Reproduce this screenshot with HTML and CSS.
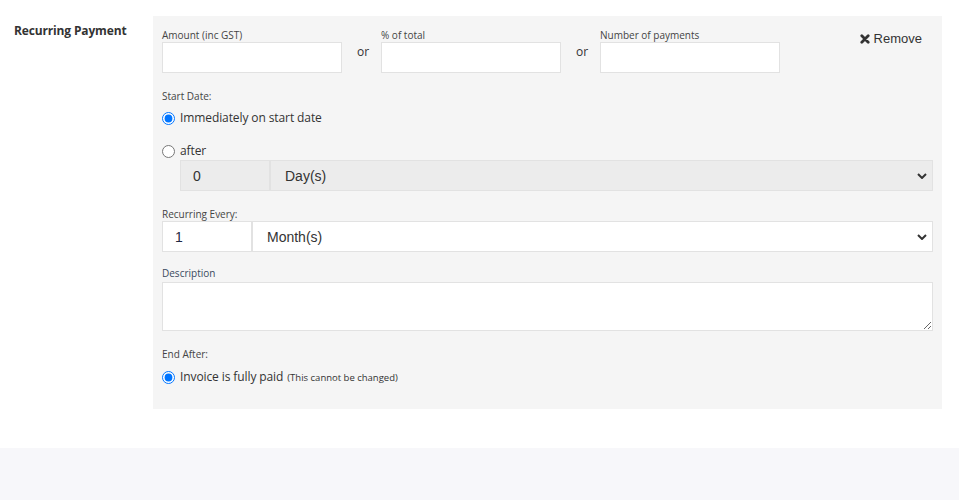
FILE: index.html
```html
<!DOCTYPE html>
<html lang="en">
<head>
  <meta charset="UTF-8">
  <meta name="viewport" content="width=device-width, initial-scale=1.0">
  <title>Recurring Payment</title>
  <link rel="stylesheet" href="styles.css">
</head>
<body>

  <div class="payment-row">
    <div class="row-title">Recurring Payment</div>

    <div class="panel">
      <div class="amounts">
        <div class="field">
          <label for="amount">Amount (inc GST)</label>
          <input type="text" id="amount" class="text-input">
        </div>
        <span class="or">or</span>
        <div class="field">
          <label for="percent">% of total</label>
          <input type="text" id="percent" class="text-input">
        </div>
        <span class="or">or</span>
        <div class="field">
          <label for="payments">Number of payments</label>
          <input type="text" id="payments" class="text-input">
        </div>
        <a class="remove" href="#">
          <svg width="10" height="10" viewBox="0 0 10 10"><path d="M1.8 1.8 L8.2 8.2 M8.2 1.8 L1.8 8.2" stroke="#333" stroke-width="2.8" stroke-linecap="round"/></svg>
          Remove
        </a>
      </div>

      <div class="section-label">Start Date:</div>
      <label class="radio-row first">
        <input type="radio" name="start" checked> Immediately on start date
      </label>
      <label class="radio-row second">
        <input type="radio" name="start"> after
      </label>
      <div class="combo disabled indented">
        <input type="text" class="combo-num" value="0" disabled>
        <div class="select-wrap">
          <select disabled><option>Day(s)</option></select>
          <svg class="chevron" width="10" height="6" viewBox="0 0 10 6"><path d="M1 1 L5 5 L9 1" fill="none" stroke="#333" stroke-width="2"/></svg>
        </div>
      </div>

      <div class="section-label recurring">Recurring Every:</div>
      <div class="combo">
        <input type="text" class="combo-num" value="1">
        <div class="select-wrap">
          <select><option>Month(s)</option></select>
          <svg class="chevron" width="10" height="6" viewBox="0 0 10 6"><path d="M1 1 L5 5 L9 1" fill="none" stroke="#333" stroke-width="2"/></svg>
        </div>
      </div>

      <div class="section-label description">Description</div>
      <textarea class="desc"></textarea>

      <div class="section-label">End After:</div>
      <label class="radio-row end">
        <input type="radio" name="end" checked> Invoice is fully paid <small>(This cannot be changed)</small>
      </label>
    </div>
  </div>

  <div class="footer-band"></div>

</body>
</html>
```

FILE: styles.css
```css
body {
  margin: 0;
  font-family: 'Open Sans', sans-serif;
  color: #333;
  background-color: #fff;
}

.payment-row {
  display: flex;
  padding-top: 16px;
}

.row-title {
  width: 153px;
  box-sizing: border-box;
  padding: 6px 0 0 14px;
  font-size: 12px;
  font-weight: bold;
  line-height: 18px;
  letter-spacing: -0.15px;
}

.panel {
  width: 789px;
  box-sizing: border-box;
  padding: 12px 9px 22px;
  background-color: #f5f5f5;
}

.amounts {
  display: flex;
  align-items: flex-end;
}

.field label {
  display: block;
  font-size: 10px;
  line-height: 14px;
  color: #444;
}

.text-input {
  display: block;
  width: 180px;
  height: 31px;
  box-sizing: border-box;
  margin: 0;
  border: 1px solid #e2e2e2;
  background-color: #fff;
}

.or {
  width: 39px;
  box-sizing: border-box;
  padding: 0 0 14px 3px;
  text-align: center;
  font-size: 12px;
  line-height: 14px;
}

.remove {
  align-self: flex-start;
  margin: 2px 11px 0 auto;
  display: flex;
  align-items: center;
  gap: 4px;
  font-family: 'Liberation Sans', Arial, sans-serif;
  font-size: 13px;
  line-height: 18px;
  color: #333;
  text-decoration: none;
}

.section-label {
  margin-top: 16px;
  font-size: 10px;
  line-height: 14px;
  color: #444;
}

.section-label.description {
  margin-top: 14px;
  color: #3a4a60;
}

.radio-row {
  display: flex;
  align-items: center;
  font-size: 12px;
  line-height: 18px;
  letter-spacing: -0.1px;
}

.radio-row input {
  width: 13px;
  height: 13px;
  margin: 0 5px 0 0;
}

.radio-row.first {
  margin-top: 6px;
}

.radio-row.second {
  margin-top: 15px;
}

.radio-row.end {
  margin-top: 6px;
}

.radio-row small {
  font-size: 9.5px;
  margin-left: 4px;
  padding-top: 2px;
  letter-spacing: 0;
}

.combo {
  display: flex;
  height: 31px;
}

.combo.indented {
  margin-left: 18px;
}

.combo-num {
  width: 90px;
  box-sizing: border-box;
  margin: 0;
  padding: 0 12px;
  border: 1px solid #e2e2e2;
  background-color: #fff;
  font-family: 'Liberation Sans', Arial, sans-serif;
  font-size: 14px;
  color: #1f2a44;
}

.select-wrap {
  position: relative;
  flex: 1;
}

.select-wrap select {
  appearance: none;
  width: 100%;
  height: 100%;
  margin: 0;
  padding: 0 14px;
  border: 1px solid #e2e2e2;
  background-color: #fff;
  font-family: 'Liberation Sans', Arial, sans-serif;
  font-size: 14px;
  color: #333;
}

.chevron {
  position: absolute;
  right: 6px;
  top: 13px;
}

.combo.disabled .combo-num,
.combo.disabled select {
  background-color: #ececec;
  color: #333;
  opacity: 1;
}

.desc {
  display: block;
  width: 100%;
  height: 49px;
  box-sizing: border-box;
  margin-top: 2px;
  border: 1px solid #e2e2e2;
  background-color: #fff;
  resize: vertical;
}

.footer-band {
  margin-top: 39px;
  height: 52px;
  background-color: #f7f7fa;
}
```
